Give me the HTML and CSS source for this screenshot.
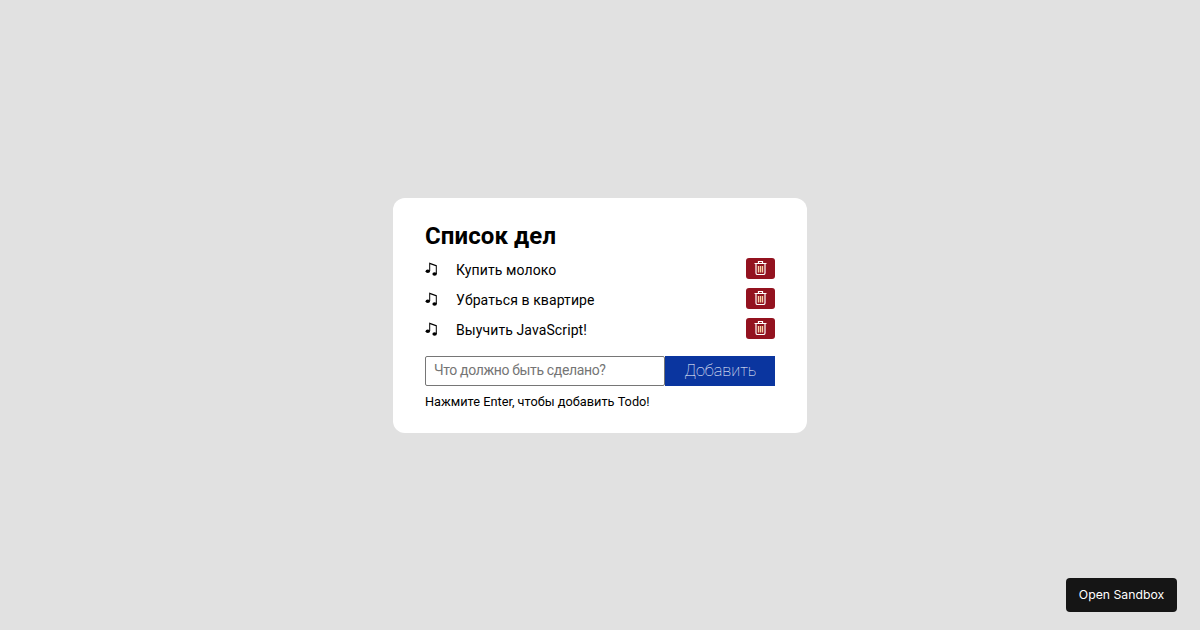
FILE: index.html
```html
<!DOCTYPE html>
<html lang="ru">
<head>
    <meta charset="UTF-8">
    <meta name="viewport" content="width=device-width, initial-scale=1.0">
    <title>Список дел</title>
    <link rel="stylesheet" href="styles.css">
</head>
<body>

    <div class="card">
        <h1>Список дел</h1>

        <ul class="todo-list">
            <li class="todo-item">
                <svg class="note" viewBox="0 0 13 14" width="13" height="14"><ellipse cx="2.8" cy="9.2" rx="2.2" ry="1.7"/><ellipse cx="9.6" cy="12" rx="2.2" ry="1.7"/><path d="M4.2 9V.6l7.6 2.6V12h-1V4.2L5.2 2.2V9z"/></svg>
                <span class="todo-text">Купить молоко</span>
                <button class="delete">
                    <svg class="trash" viewBox="0 0 13 14" width="13" height="14"><path class="trash-bars" d="M4.5 5v6.5M6.5 5v6.5M8.5 5v6.5"/><path class="trash-line" d="M.5 2.5h12M4.5 2.5V.5h4v2M2 2.5v9.5q0 1.5 1.5 1.5h6q1.5 0 1.5-1.5V2.5"/></svg>
                </button>
            </li>
            <li class="todo-item">
                <svg class="note" viewBox="0 0 13 14" width="13" height="14"><ellipse cx="2.8" cy="9.2" rx="2.2" ry="1.7"/><ellipse cx="9.6" cy="12" rx="2.2" ry="1.7"/><path d="M4.2 9V.6l7.6 2.6V12h-1V4.2L5.2 2.2V9z"/></svg>
                <span class="todo-text">Убраться в квартире</span>
                <button class="delete">
                    <svg class="trash" viewBox="0 0 13 14" width="13" height="14"><path class="trash-bars" d="M4.5 5v6.5M6.5 5v6.5M8.5 5v6.5"/><path class="trash-line" d="M.5 2.5h12M4.5 2.5V.5h4v2M2 2.5v9.5q0 1.5 1.5 1.5h6q1.5 0 1.5-1.5V2.5"/></svg>
                </button>
            </li>
            <li class="todo-item">
                <svg class="note" viewBox="0 0 13 14" width="13" height="14"><ellipse cx="2.8" cy="9.2" rx="2.2" ry="1.7"/><ellipse cx="9.6" cy="12" rx="2.2" ry="1.7"/><path d="M4.2 9V.6l7.6 2.6V12h-1V4.2L5.2 2.2V9z"/></svg>
                <span class="todo-text">Выучить JavaScript!</span>
                <button class="delete">
                    <svg class="trash" viewBox="0 0 13 14" width="13" height="14"><path class="trash-bars" d="M4.5 5v6.5M6.5 5v6.5M8.5 5v6.5"/><path class="trash-line" d="M.5 2.5h12M4.5 2.5V.5h4v2M2 2.5v9.5q0 1.5 1.5 1.5h6q1.5 0 1.5-1.5V2.5"/></svg>
                </button>
            </li>
        </ul>

        <form class="todo-form">
            <input type="text" class="todo-input" placeholder="Что должно быть сделано?">
            <button type="button" class="add-btn">Добавить</button>
        </form>

        <p class="hint">Нажмите Enter, чтобы добавить Todo!</p>
    </div>

    <a class="sandbox-btn">Open Sandbox</a>

</body>
</html>
```

FILE: styles.css
```css
* {
    box-sizing: border-box;
}

body {
    margin: 0;
    height: 630px;
    overflow: hidden;
    font-family: Roboto, sans-serif;
    background-color: #e1e1e1;
    display: flex;
    justify-content: center;
    align-items: center;
}

.card {
    width: 414px;
    height: 235px;
    margin-top: 1px;
    padding: 24px 32px;
    background: #fff;
    border-radius: 12px;
    color: #000;
}

h1 {
    margin: 0;
    font-size: 24px;
    line-height: 28px;
    font-weight: 700;
    letter-spacing: 0.1px;
}

.todo-list {
    list-style: none;
    margin: 5px 0 0;
    padding: 0;
}

.todo-item {
    display: flex;
    align-items: center;
    height: 30px;
    font-size: 14px;
}

.note {
    margin: 0 18px 2px 0;
    fill: #000;
}

.todo-text {
    flex: 1;
    letter-spacing: 0.1px;
}

.delete {
    width: 29px;
    height: 21px;
    margin-bottom: 4px;
    padding: 0;
    border: none;
    border-radius: 3px;
    background-color: #93121f;
    display: flex;
    justify-content: center;
    align-items: center;
}

.trash-bars {
    fill: none;
    stroke: #f7d3a8;
    stroke-width: 1.3;
}

.trash-line {
    fill: none;
    stroke: #fff;
    stroke-width: 1.2;
}

.todo-form {
    display: flex;
    margin-top: 11px;
}

.todo-input {
    width: 240px;
    height: 30px;
    padding: 0 8px 3px;
    border: 1px solid #767676;
    border-radius: 2px;
    font-family: Roboto, sans-serif;
    font-size: 14px;
    letter-spacing: -0.36px;
}

.todo-input::placeholder {
    color: #757575;
}

.add-btn {
    width: 110px;
    height: 30px;
    padding: 0 0 2px 1px;
    border: none;
    background-color: #0a359f;
    color: #fff;
    font-family: Roboto, sans-serif;
    font-size: 16.3px;
    font-weight: 100;
}

.hint {
    margin: 8px 0 0;
    font-size: 12.75px;
    line-height: 15px;
}

.sandbox-btn {
    position: absolute;
    right: 23px;
    bottom: 18px;
    width: 111px;
    height: 34px;
    padding-bottom: 2px;
    background-color: #151515;
    color: #fff;
    border-radius: 4px;
    font-family: Inter, sans-serif;
    font-size: 12.25px;
    display: flex;
    justify-content: center;
    align-items: center;
}
```
